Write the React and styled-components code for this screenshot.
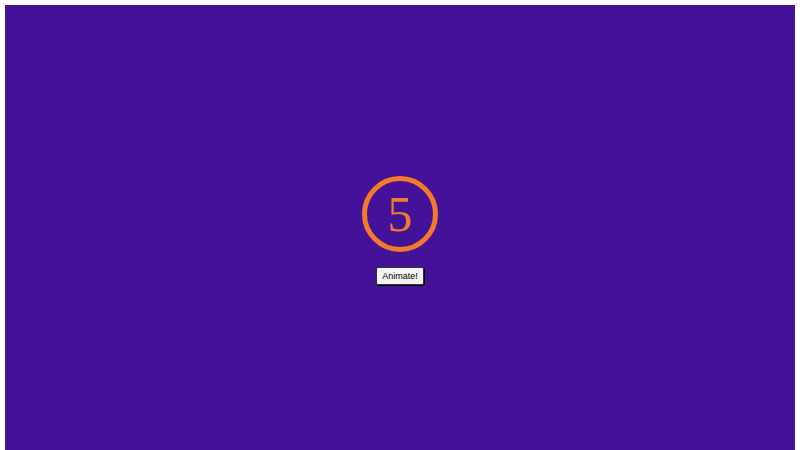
import React from "react";
import styled, { createGlobalStyle } from "styled-components";

const GlobalStyle = createGlobalStyle`
  body {
    margin: 0;
    background: #ffffff;
  }
`;

const Stage = styled.div`
  margin: 5px;
  height: 100vh;
  background-color: #431298;
  display: flex;
  flex-direction: column;
  align-items: center;
  justify-content: center;
  gap: 15px;
`;

const Counter = styled.div`
  box-sizing: border-box;
  width: 76px;
  height: 76px;
  border: 5px solid #f47a29;
  border-radius: 50%;
  display: flex;
  align-items: center;
  justify-content: center;
  color: #f47a29;
  font-family: "Liberation Serif", serif;
  font-size: 50px;
  line-height: 1;
`;

const Button = styled.button`
  font-family: "Liberation Sans", Arial, sans-serif;
  font-size: 9px;
  height: 18px;
  padding: 0 5px;
  background: #f4f4f4;
  color: #000;
  border: 1px solid #333;
  border-radius: 2px;
  box-shadow: 1px 1px 0 #000;
`;

const App = () => {
  return (
    <>
      <GlobalStyle />
      <Stage>
        <Counter>5</Counter>
        <Button>Animate!</Button>
      </Stage>
    </>
  );
};

export default App;
